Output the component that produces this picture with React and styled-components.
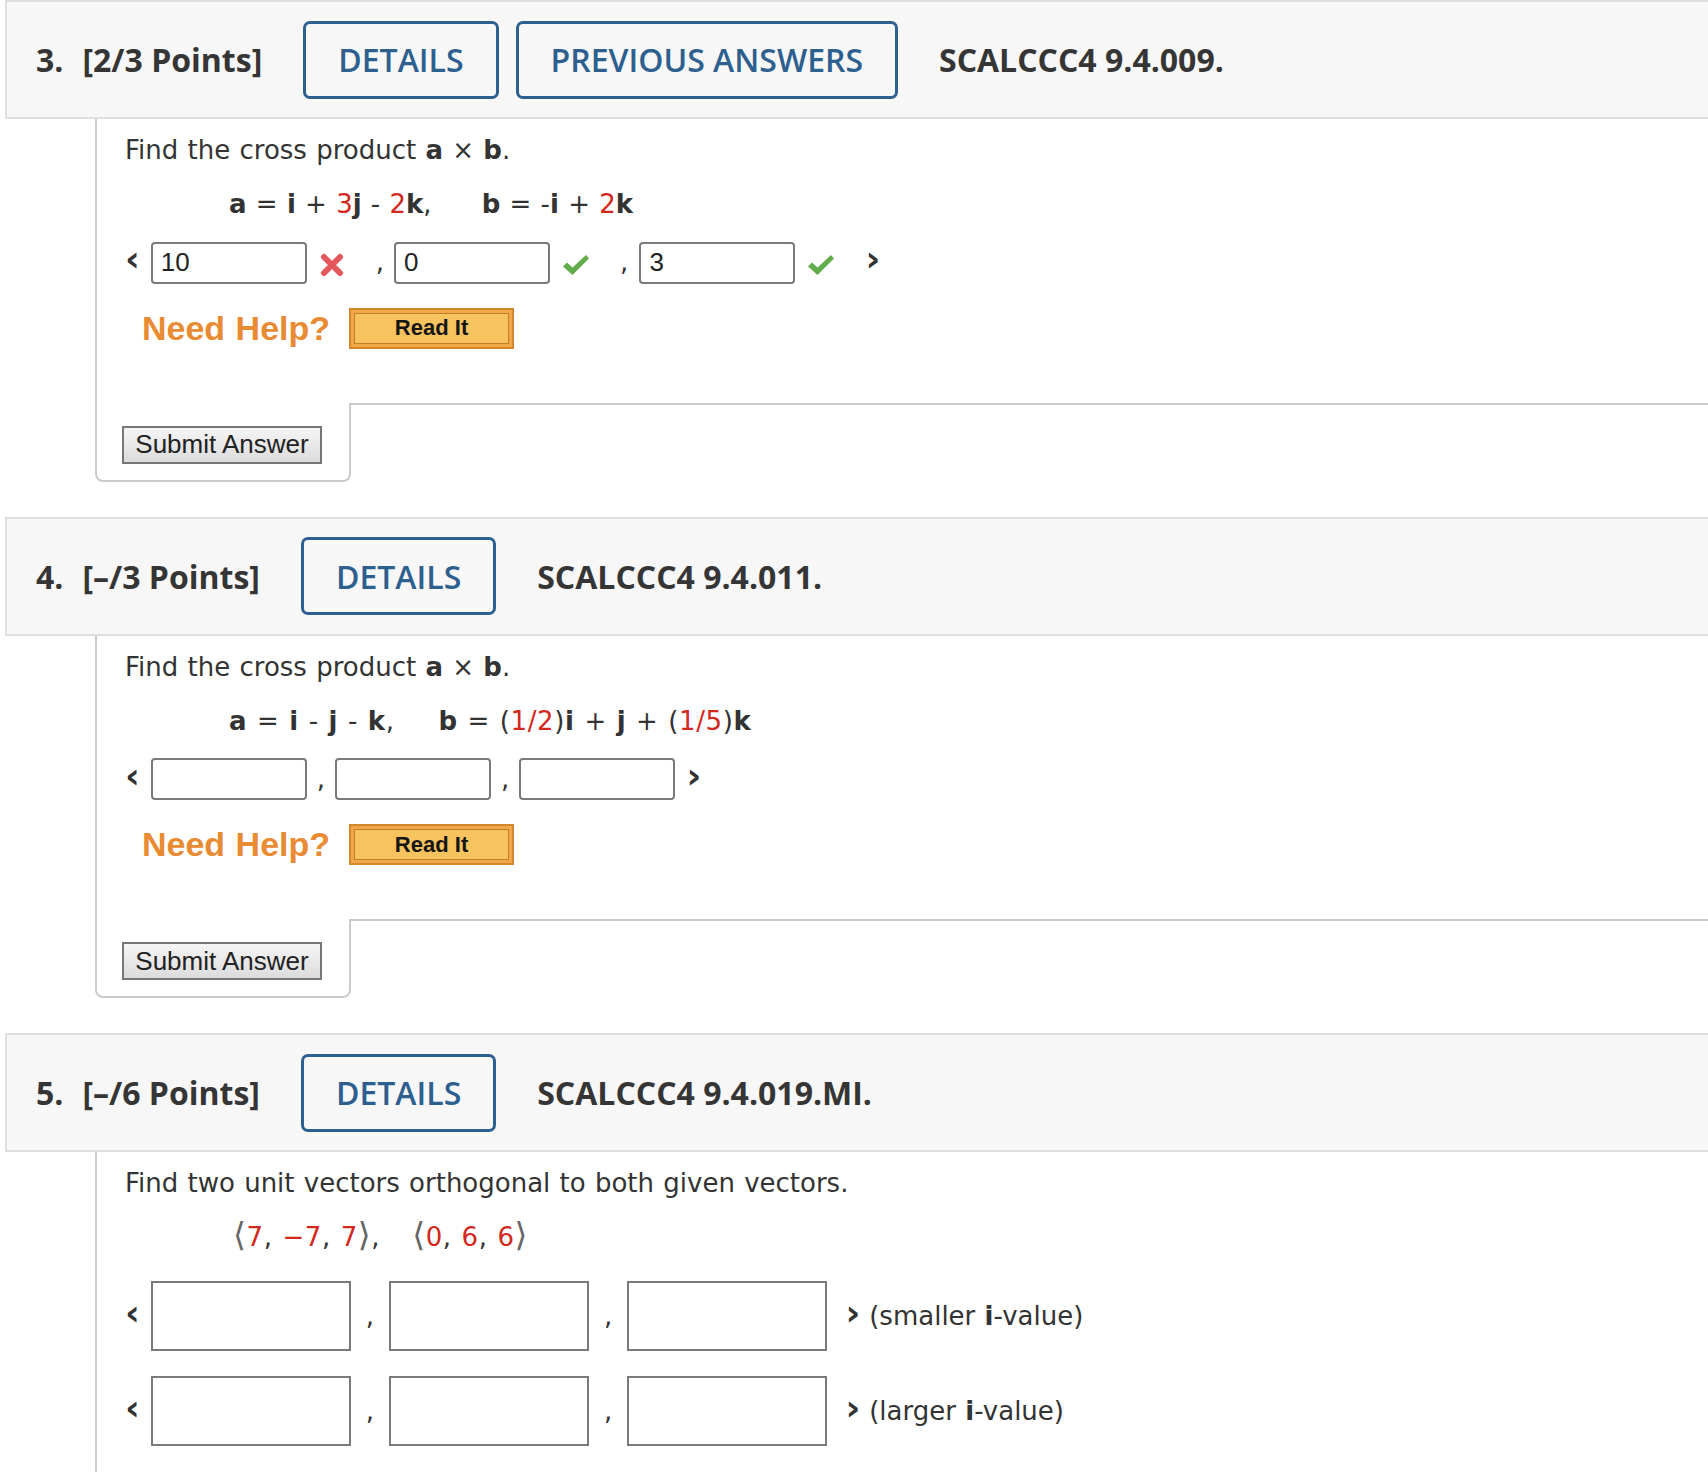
import React from "react";
import styled, { createGlobalStyle } from "styled-components";

const GlobalStyle = createGlobalStyle`
  html, body { margin: 0; padding: 0; background: #fff; }
  * { box-sizing: border-box; }
`;

const Page = styled.div`
  width: 1708px;
  height: 1472px;
  overflow: hidden;
  padding-left: 5px;
`;

const Question = styled.section`
  margin-bottom: ${(p) => (p.$last ? 0 : 35)}px;
`;

const Header = styled.header`
  display: flex;
  align-items: center;
  height: 119px;
  background: #f7f7f7;
  border: 2px solid #dfdfdf;
  border-right: none;
  padding-left: 29px;
  font-family: "Open Sans", "Liberation Sans", sans-serif;
  font-size: 32px;
  color: #353535;
  white-space: nowrap;
`;

const Label = styled.div`
  font-weight: 700;
  margin-right: 41px;
`;

const Num = styled.span`
  margin-right: 19px;
`;

const HeaderButton = styled.button`
  height: 78px;
  padding: 0 32px;
  border: 3px solid #2d5f8f;
  border-radius: 7px;
  background: transparent;
  color: #2d5f8f;
  font-family: "Open Sans", "Liberation Sans", sans-serif;
  font-weight: 600;
  font-size: 32px;
  margin-right: ${(p) => (p.$last ? 41 : 17)}px;
  cursor: pointer;
`;

const Code = styled.div`
  font-weight: 700;
`;

const Body = styled.div`
  margin-left: 90px;
`;

const Content = styled.div`
  border-left: 2px solid #cbcbcb;
  padding: 12px 0 ${(p) => p.$pb}px 28px;
  font-family: "DejaVu Sans", Verdana, sans-serif;
  font-size: 26px;
  word-spacing: 1px;
  color: #333;
`;

const Prompt = styled.p`
  margin: 0;
  line-height: 39px;
`;

const Formula = styled.div`
  margin-top: 15px;
  height: 39px;
  line-height: 39px;
  padding-left: ${(p) => p.$indent || 104}px;
  white-space: nowrap;
  letter-spacing: ${(p) => p.$ls || 0}px;
`;

const B = styled.b`
  font-weight: 700;
`;

const Red = styled.span`
  color: #d2281e;
`;

const Bracket = styled.span`
  color: #666;
  font-size: 33px;
  line-height: 0;
`;

const Spacer = styled.span`
  display: inline-block;
  width: ${(p) => p.$w}px;
`;

const AnswerRow = styled.div`
  display: flex;
  align-items: baseline;
  margin-top: ${(p) => p.$mt}px;
  white-space: nowrap;
`;

const Chevron = styled.span`
  font-family: "DejaVu Sans", Verdana, sans-serif;
  font-weight: 700;
  font-size: 36px;
  line-height: 1;
  color: #333;
  margin: ${(p) => (p.$open ? "0 11px 0 0" : `0 0 0 ${p.$gap}px`)};
`;

const Field = styled.input`
  width: ${(p) => p.$w}px;
  height: ${(p) => p.$h}px;
  border: 2px solid #7a7a7a;
  border-radius: ${(p) => p.$r}px;
  padding: 0 8px;
  font-family: "Liberation Sans", Arial, sans-serif;
  font-size: 26px;
  color: #222;
  background: #fff;
  outline: none;
`;

const Comma = styled.span`
  margin: 0 ${(p) => p.$m}px;
`;

const Mark = styled.svg`
  align-self: center;
  margin: 6px 30px 0 11px;
  flex: none;
`;

const Note = styled.span`
  margin-left: 9px;
`;

const HelpRow = styled.div`
  display: flex;
  align-items: center;
  margin-top: 24px;
  padding-left: 17px;
`;

const NeedHelp = styled.span`
  font-family: "Liberation Sans", Arial, sans-serif;
  font-weight: 700;
  font-size: 34px;
  color: #e98b33;
  margin-right: 19px;
`;

const ReadIt = styled.button`
  width: 165px;
  height: 41px;
  border: 2px solid #d4882c;
  background: #f6c35f;
  box-shadow: inset 0 0 0 3px #f1a748, inset 0 0 0 4px #c17f2c;
  font-family: "Liberation Sans", Arial, sans-serif;
  font-weight: 700;
  font-size: 22px;
  color: #151515;
  padding: 0;
  cursor: pointer;
`;

const Footer = styled.div`
  display: flex;
`;

const SubmitTab = styled.div`
  border: 2px solid #cbcbcb;
  border-top: none;
  border-radius: 0 0 8px 8px;
  padding: 23px 27px 16px 25px;
`;

const Filler = styled.div`
  flex: 1;
  border-top: 2px solid #cbcbcb;
`;

const SubmitButton = styled.button`
  display: block;
  width: 200px;
  height: 38px;
  padding: 0;
  border: 2px solid #777;
  background: linear-gradient(#f5f5f5, #dcdcdc);
  font-family: "Liberation Sans", Arial, sans-serif;
  font-size: 26px;
  color: #222;
  cursor: pointer;
`;

const Cross = () => (
  <Mark width="28" height="28" viewBox="0 0 28 28">
    <path d="M6 6L22 22M22 6L6 22" stroke="#e2585c" strokeWidth="6" strokeLinecap="round" />
  </Mark>
);

const Check = () => (
  <Mark width="29" height="28" viewBox="0 0 29 28">
    <path d="M2 15.5 L6 11.5 L11.5 16.5 L25 4 L28 7.5 L11.5 24 Z" fill="#62ad4b" />
  </Mark>
);

const QHeader = ({ num, points, buttons, code }) => (
  <Header>
    <Label>
      <Num>{num}.</Num>[{points} Points]
    </Label>
    {buttons.map((b, i) => (
      <HeaderButton key={b} $last={i === buttons.length - 1}>
        {b}
      </HeaderButton>
    ))}
    <Code>{code}</Code>
  </Header>
);

const Help = () => (
  <HelpRow>
    <NeedHelp>Need Help?</NeedHelp>
    <ReadIt>Read It</ReadIt>
  </HelpRow>
);

const Submit = () => (
  <Footer>
    <SubmitTab>
      <SubmitButton>Submit Answer</SubmitButton>
    </SubmitTab>
    <Filler />
  </Footer>
);

export default function App() {
  return (
    <>
      <GlobalStyle />
      <Page>
        <Question>
          <QHeader num={3} points="2/3" buttons={["DETAILS", "PREVIOUS ANSWERS"]} code="SCALCCC4 9.4.009." />
          <Body>
            <Content $pb={54}>
              <Prompt>
                Find the cross product <B>a</B> × <B>b</B>.
              </Prompt>
              <Formula>
                <B>a</B> = <B>i</B> + <Red>3</Red>
                <B>j</B> - <Red>2</Red>
                <B>k</B>,<Spacer $w={50} />
                <B>b</B> = -<B>i</B> + <Red>2</Red>
                <B>k</B>
              </Formula>
              <AnswerRow $mt={17}>
                <Chevron $open>‹</Chevron>
                <Field $w={156} $h={42} $r={4} defaultValue="10" readOnly />
                <Cross />
                <Comma $m={0}>,</Comma>
                <Spacer $w={10} />
                <Field $w={156} $h={42} $r={4} defaultValue="0" readOnly />
                <Check />
                <Comma $m={0}>,</Comma>
                <Spacer $w={11} />
                <Field $w={156} $h={42} $r={4} defaultValue="3" readOnly />
                <Check />
                <Chevron $gap={0}>›</Chevron>
              </AnswerRow>
              <Help />
            </Content>
            <Submit />
          </Body>
        </Question>

        <Question>
          <QHeader num={4} points="–/3" buttons={["DETAILS"]} code="SCALCCC4 9.4.011." />
          <Body>
            <Content $pb={54}>
              <Prompt>
                Find the cross product <B>a</B> × <B>b</B>.
              </Prompt>
              <Formula $ls={0.6}>
                <B>a</B> = <B>i</B> - <B>j</B> - <B>k</B>,<Spacer $w={44} />
                <B>b</B> = (<Red>1/2</Red>)<B>i</B> + <B>j</B> + (<Red>1/5</Red>)<B>k</B>
              </Formula>
              <AnswerRow $mt={17}>
                <Chevron $open>‹</Chevron>
                <Field $w={156} $h={42} $r={4} readOnly />
                <Comma $m={10}>,</Comma>
                <Field $w={156} $h={42} $r={4} readOnly />
                <Comma $m={10}>,</Comma>
                <Field $w={156} $h={42} $r={4} readOnly />
                <Chevron $gap={11}>›</Chevron>
              </AnswerRow>
              <Help />
            </Content>
            <Submit />
          </Body>
        </Question>

        <Question $last>
          <QHeader num={5} points="–/6" buttons={["DETAILS"]} code="SCALCCC4 9.4.019.MI." />
          <Body>
            <Content $pb={200}>
              <Prompt>Find two unit vectors orthogonal to both given vectors.</Prompt>
              <Formula $ls={0.6} $indent={108}>
                <Bracket>⟨</Bracket>
                <Red>7</Red>, <Red>−7</Red>, <Red>7</Red>
                <Bracket>⟩</Bracket>,<Spacer $w={32} />
                <Bracket>⟨</Bracket>
                <Red>0</Red>, <Red>6</Red>, <Red>6</Red>
                <Bracket>⟩</Bracket>
              </Formula>
              <AnswerRow $mt={24}>
                <Chevron $open>‹</Chevron>
                <Field $w={200} $h={70} $r={0} readOnly />
                <Comma $m={15}>,</Comma>
                <Field $w={200} $h={70} $r={0} readOnly />
                <Comma $m={15}>,</Comma>
                <Field $w={200} $h={70} $r={0} readOnly />
                <Chevron $gap={18}>›</Chevron>
                <Note>
                  (smaller <B>i</B>-value)
                </Note>
              </AnswerRow>
              <AnswerRow $mt={25}>
                <Chevron $open>‹</Chevron>
                <Field $w={200} $h={70} $r={0} readOnly />
                <Comma $m={15}>,</Comma>
                <Field $w={200} $h={70} $r={0} readOnly />
                <Comma $m={15}>,</Comma>
                <Field $w={200} $h={70} $r={0} readOnly />
                <Chevron $gap={18}>›</Chevron>
                <Note>
                  (larger <B>i</B>-value)
                </Note>
              </AnswerRow>
            </Content>
          </Body>
        </Question>
      </Page>
    </>
  );
}
